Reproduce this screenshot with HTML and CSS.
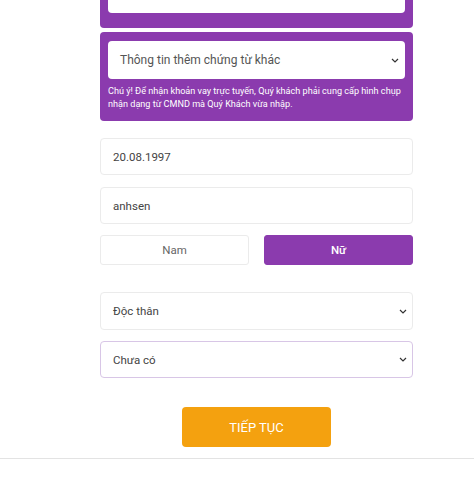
FILE: index.html
```html
<!DOCTYPE html>
<html lang="vi">
<head>
<meta charset="utf-8">
<title>Form</title>
<link rel="stylesheet" href="styles.css">
</head>
<body>
<div class="page">
  <div class="col">
    <div class="panel panel-top">
      <div class="field-cut"></div>
    </div>
    <div class="panel panel-docs">
      <div class="field select">
        <span>Thông tin thêm chứng từ khác</span>
        <svg class="chev" width="8" height="5" viewBox="0 0 8 5"><path d="M1 1l3 3 3-3" fill="none" stroke="#333" stroke-width="1.2"/></svg>
      </div>
      <p class="note">Chú ý! Để nhận khoản vay trực tuyến, Quý khách phải cung cấp hình chụp nhận dạng từ CMND mà Quý Khách vừa nhập.</p>
    </div>
    <div class="field input gap-lg">20.08.1997</div>
    <div class="field input gap-md">anhsen</div>
    <div class="gender gap-sm">
      <div class="gbtn">Nam</div>
      <div class="gbtn active">Nữ</div>
    </div>
    <div class="field input tall select gap-xl">
      <span>Độc thân</span>
      <svg class="chev" width="8" height="5" viewBox="0 0 8 5"><path d="M1 1l3 3 3-3" fill="none" stroke="#333" stroke-width="1.2"/></svg>
    </div>
    <div class="field input select focus gap-sm">
      <span>Chưa có</span>
      <svg class="chev" width="8" height="5" viewBox="0 0 8 5"><path d="M1 1l3 3 3-3" fill="none" stroke="#333" stroke-width="1.2"/></svg>
    </div>
    <div class="actions">
      <div class="next">TIẾP TỤC</div>
    </div>
  </div>
  <div class="divider"></div>
</div>
</body>
</html>
```
FILE: styles.css
```css
* { box-sizing: border-box; }
html, body { margin: 0; padding: 0; background: #fff; }
body { font-family: Roboto, "Noto Sans", Arial, sans-serif; color: #444; width: 474px; height: 477px; overflow: hidden; }
.page { width: 474px; }
.col { margin-left: 100px; width: 313px; display: flex; flex-direction: column; }
.panel { background: #8b3bae; border-radius: 4px; padding: 0 8px; }
.panel-top { height: 28px; padding-bottom: 15px; border-radius: 0 0 4px 4px; }
.field-cut { height: 13px; background: #fff; border-radius: 0 0 4px 4px; }
.panel-docs { margin-top: 4px; padding: 9px 8px 10px; }
.field { background: #fff; border-radius: 4px; height: 38px; display: flex; align-items: center; justify-content: space-between; font-size: 11.5px; color: #444; }
.panel-docs .field { padding: 0 6px 0 12px; font-size: 12px; color: #555; }
.input { border: 1px solid #ebebeb; height: 37px; padding: 0 5px 0 12px; }
.input.tall { height: 38px; }
.focus { border-color: #d8c6e6; }
.chev { flex: none; }
.note { margin: 6px 0 0; font-size: 9.1px; line-height: 13px; color: #fff; }
.gap-lg { margin-top: 17px; }
.gap-md { margin-top: 12px; }
.gap-sm { margin-top: 11px; }
.gap-xl { margin-top: 27px; }
.gender { display: flex; gap: 15px; }
.gbtn { flex: 1; height: 30px; border: 1px solid #ebebeb; border-radius: 3px; display: flex; align-items: center; justify-content: center; font-size: 11.5px; color: #666; }
.gbtn.active { background: #8b3bae; border-color: #8b3bae; color: #fff; font-weight: 500; }
.actions { display: flex; justify-content: center; margin-top: 29px; }
.next { width: 149px; height: 40px; background: #f4a10f; border-radius: 4px; color: #fff; font-size: 13px; display: flex; align-items: center; justify-content: center; }
.divider { margin-top: 11px; height: 1px; background: #e3e3e3; }
```
